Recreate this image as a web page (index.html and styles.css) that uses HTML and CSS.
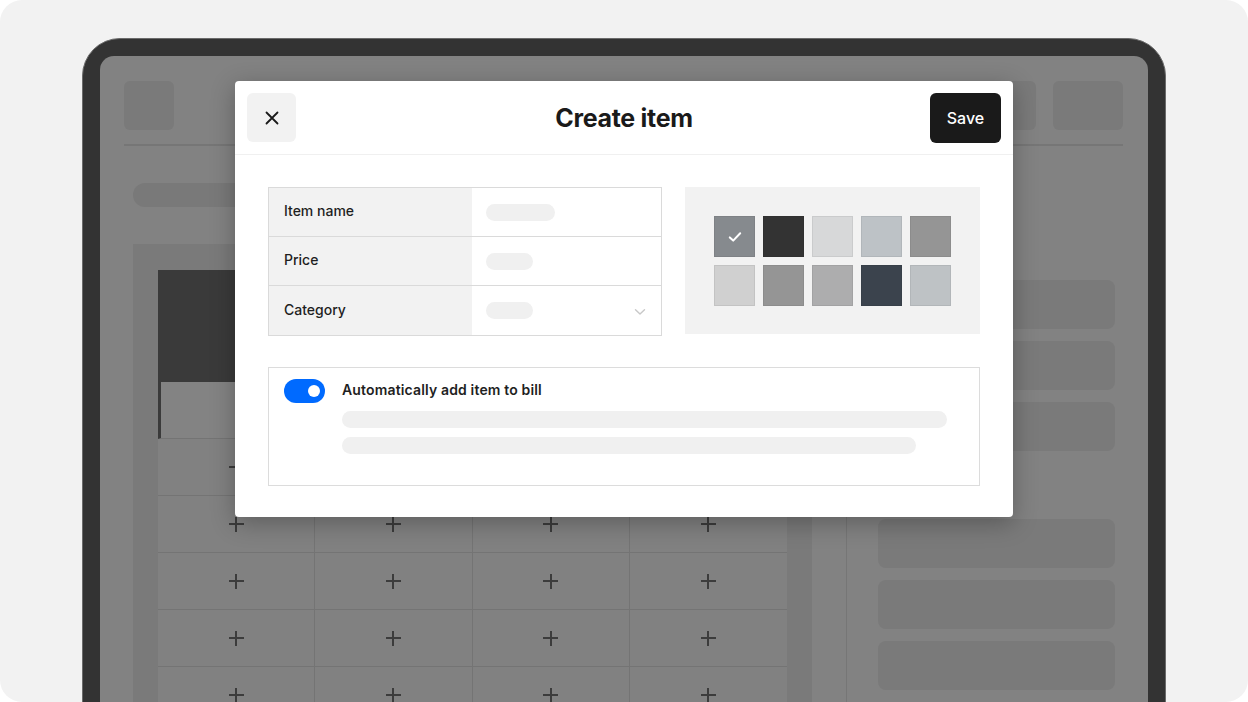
FILE: index.html
```html
<!DOCTYPE html>
<html lang="en">
<head>
<meta charset="UTF-8">
<meta name="viewport" content="width=device-width, initial-scale=1.0">
<title>Create item</title>
<link rel="stylesheet" href="styles.css">
</head>
<body>
<div class="frame">
    <div class="device">
        <div class="screen">
            <!-- dimmed app behind the dialog -->
            <div class="topbar">
                <div class="tile"></div>
                <div class="topbar-right">
                    <div class="tile wide"></div>
                    <div class="tile wide"></div>
                </div>
            </div>
            <div class="rule"></div>
            <div class="search-pill"></div>

            <div class="workspace">
                <div class="board">
                    <div class="board-head"></div>
                    <div class="board-row"></div>
                    <div class="board-grid">
                        <div class="cell"><span class="plus"></span></div>
                        <div class="cell"><span class="plus"></span></div>
                        <div class="cell"><span class="plus"></span></div>
                        <div class="cell"><span class="plus"></span></div>
                        <div class="cell"><span class="plus"></span></div>
                        <div class="cell"><span class="plus"></span></div>
                        <div class="cell"><span class="plus"></span></div>
                        <div class="cell"><span class="plus"></span></div>
                        <div class="cell"><span class="plus"></span></div>
                        <div class="cell"><span class="plus"></span></div>
                        <div class="cell"><span class="plus"></span></div>
                        <div class="cell"><span class="plus"></span></div>
                        <div class="cell"><span class="plus"></span></div>
                        <div class="cell"><span class="plus"></span></div>
                        <div class="cell"><span class="plus"></span></div>
                        <div class="cell"><span class="plus"></span></div>
                        <div class="cell"><span class="plus"></span></div>
                        <div class="cell"><span class="plus"></span></div>
                        <div class="cell"><span class="plus"></span></div>
                        <div class="cell"><span class="plus"></span></div>
                    </div>
                </div>
                <div class="sidebar">
                    <div class="side-box"></div>
                    <div class="side-box"></div>
                    <div class="side-box"></div>
                    <div class="side-gap"></div>
                    <div class="side-box"></div>
                    <div class="side-box"></div>
                    <div class="side-box"></div>
                </div>
            </div>

            <!-- Create item dialog -->
            <div class="modal">
                <div class="modal-header">
                    <button class="close-btn" aria-label="Close">
                        <svg width="16" height="16" viewBox="0 0 16 16" fill="none">
                            <path d="M2.5 2.5 L13.5 13.5 M13.5 2.5 L2.5 13.5" stroke="#1a1a1a" stroke-width="1.8" stroke-linecap="round"/>
                        </svg>
                    </button>
                    <h1 class="modal-title">Create item</h1>
                    <button class="save-btn">Save</button>
                </div>

                <div class="modal-body">
                    <div class="top-row">
                        <div class="fields">
                            <div class="field">
                                <div class="field-label">Item name</div>
                                <div class="field-value"><span class="skeleton long"></span></div>
                            </div>
                            <div class="field">
                                <div class="field-label">Price</div>
                                <div class="field-value"><span class="skeleton short"></span></div>
                            </div>
                            <div class="field">
                                <div class="field-label">Category</div>
                                <div class="field-value">
                                    <span class="skeleton short"></span>
                                    <svg class="chevron" width="12" height="8" viewBox="0 0 12 8" fill="none">
                                        <path d="M1.5 1.8 L6 6 L10.5 1.8" stroke="#c8c8c8" stroke-width="1.4" stroke-linecap="round" stroke-linejoin="round"/>
                                    </svg>
                                </div>
                            </div>
                        </div>

                        <div class="swatch-panel">
                            <div class="swatches">
                                <div class="swatch c1">
                                    <svg width="14" height="12" viewBox="0 0 14 12" fill="none">
                                        <path d="M1.8 6.4 L5.2 9.6 L12.2 2.2" stroke="#fff" stroke-width="2" stroke-linecap="round" stroke-linejoin="round"/>
                                    </svg>
                                </div>
                                <div class="swatch c2"></div>
                                <div class="swatch c3"></div>
                                <div class="swatch c4"></div>
                                <div class="swatch c5"></div>
                                <div class="swatch c6"></div>
                                <div class="swatch c7"></div>
                                <div class="swatch c8"></div>
                                <div class="swatch c9"></div>
                                <div class="swatch c10"></div>
                            </div>
                        </div>
                    </div>

                    <div class="auto-add">
                        <div class="toggle"><span class="knob"></span></div>
                        <div class="auto-text">
                            <div class="auto-label">Automatically add item to bill</div>
                            <div class="line wide-line"></div>
                            <div class="line mid-line"></div>
                        </div>
                    </div>
                </div>
            </div>
        </div>
    </div>
</div>
</body>
</html>
```

FILE: styles.css
```css
* {
    box-sizing: border-box;
}

html,
body {
    margin: 0;
    padding: 0;
    width: 1248px;
    height: 702px;
    overflow: hidden;
    background-color: #fff;
    font-family: Inter, 'Noto Sans', sans-serif;
}

.frame {
    width: 1248px;
    height: 702px;
    background-color: #f2f2f2;
    border-radius: 22px;
    padding-top: 38px;
    overflow: hidden;
}

/* Tablet */
.device {
    width: 1084px;
    height: 760px;
    margin: 0 auto;
    padding: 17px;
    background-color: #333;
    border: 1px solid #6b6b6b;
    border-radius: 38px;
}

.screen {
    position: relative;
    height: 100%;
    padding: 25px 25px 0 24px;
    background-color: #828282;
    border-radius: 14px;
    overflow: hidden;
}

.topbar {
    display: flex;
    justify-content: space-between;
    height: 49px;
}

.topbar-right {
    display: flex;
    gap: 17px;
}

.tile {
    width: 50px;
    height: 49px;
    background-color: #7a7a7a;
    border-radius: 6px;
}

.tile.wide {
    width: 70px;
}

.rule {
    height: 2px;
    margin-top: 14px;
    background-color: #767676;
}

.search-pill {
    width: 230px;
    height: 24px;
    margin: 37px 0 0 9px;
    background-color: #797979;
    border-radius: 12px;
}

.workspace {
    display: flex;
    margin: 37px -25px 0 9px;
}

.board {
    width: 679px;
    height: 520px;
    padding: 26px 25px 0;
    background-color: #7a7a7a;
}

.board-head {
    height: 112px;
    background-color: #3a3a3a;
}

.board-row {
    height: 57px;
    background-color: #838383;
    border-left: 3px solid #3a3a3a;
    border-bottom: 1px solid #747474;
}

.board-grid {
    display: grid;
    grid-template-columns: repeat(4, 1fr);
    grid-auto-rows: 57px;
}

.cell {
    display: flex;
    align-items: center;
    justify-content: center;
    background-color: #818181;
    border-right: 1px solid #747474;
    border-bottom: 1px solid #747474;
}

.cell:nth-child(4n) {
    border-right: none;
}

.plus {
    position: relative;
    width: 15px;
    height: 15px;
}

.plus::before,
.plus::after {
    content: "";
    position: absolute;
    background-color: #3c3c3c;
}

.plus::before {
    left: 0;
    top: 6.5px;
    width: 15px;
    height: 2px;
}

.plus::after {
    left: 6.5px;
    top: 0;
    width: 2px;
    height: 15px;
}

.sidebar {
    flex: 1;
    margin-left: 34px;
    padding: 36px 33px 0 31px;
    border-left: 1px solid #767676;
    display: flex;
    flex-direction: column;
    gap: 12px;
}

.side-box {
    height: 49px;
    flex: none;
    background-color: #7a7a7a;
    border-radius: 8px;
}

.side-gap {
    height: 44px;
    flex: none;
}

/* Dialog */
.modal {
    position: absolute;
    left: 135px;
    top: 25px;
    width: 778px;
    height: 436px;
    background-color: #fff;
    border-radius: 4px;
    box-shadow: 0 6px 24px rgba(0, 0, 0, 0.28);
}

.modal-header {
    position: relative;
    display: flex;
    align-items: center;
    justify-content: space-between;
    height: 74px;
    padding: 0 12px;
    border-bottom: 1px solid #f0f0f0;
}

.close-btn {
    display: flex;
    align-items: center;
    justify-content: center;
    width: 49px;
    height: 49px;
    padding: 0;
    border: none;
    border-radius: 6px;
    background-color: #f2f2f2;
}

.modal-title {
    position: absolute;
    left: 0;
    right: 0;
    top: 23px;
    margin: 0;
    text-align: center;
    font-size: 25px;
    line-height: 29px;
    font-weight: 700;
    letter-spacing: -0.3px;
    color: #1a1a1a;
    pointer-events: none;
}

.save-btn {
    width: 71px;
    height: 50px;
    padding: 0;
    border: none;
    border-radius: 6px;
    background-color: #1a1a1a;
    color: #fff;
    font-family: Inter, 'Noto Sans', sans-serif;
    font-size: 16px;
    font-weight: 500;
}

.modal-body {
    padding: 32px 33px 0;
}

.top-row {
    display: flex;
    justify-content: space-between;
}

.fields {
    width: 394px;
    border: 1px solid #dadada;
}

.field {
    display: flex;
    height: 49px;
    border-bottom: 1px solid #dadada;
}

.field:last-child {
    border-bottom: none;
}

.field-label {
    display: flex;
    align-items: center;
    width: 203px;
    padding: 0 0 3px 15px;
    background-color: #f2f2f2;
    font-size: 14px;
    font-weight: 500;
    color: #1f1f1f;
}

.field-value {
    position: relative;
    display: flex;
    align-items: center;
    flex: 1;
    padding-left: 14px;
}

.skeleton {
    display: block;
    height: 17px;
    background-color: #f0f0f0;
    border-radius: 9px;
}

.skeleton.long {
    width: 69px;
}

.skeleton.short {
    width: 47px;
}

.chevron {
    position: absolute;
    right: 15px;
    top: 22px;
}

.swatch-panel {
    width: 295px;
    height: 147px;
    padding: 29px;
    background-color: #f2f2f2;
}

.swatches {
    display: grid;
    grid-template-columns: repeat(5, 41px);
    grid-auto-rows: 41px;
    gap: 8px;
}

.swatch {
    display: flex;
    align-items: center;
    justify-content: center;
    border: 1px solid rgba(0, 0, 0, 0.06);
}

.c1 { background-color: #868a8e; }
.c2 { background-color: #333; }
.c3 { background-color: #d7d8d9; }
.c4 { background-color: #bdc2c6; }
.c5 { background-color: #959595; }
.c6 { background-color: #d0d0d0; }
.c7 { background-color: #959595; }
.c8 { background-color: #adadae; }
.c9 { background-color: #3b434d; }
.c10 { background-color: #bec2c5; }

.auto-add {
    display: flex;
    gap: 17px;
    height: 119px;
    margin-top: 31px;
    padding: 11px 16px 0 15px;
    border: 1px solid #dcdcdc;
}

.toggle {
    position: relative;
    flex: none;
    width: 41px;
    height: 24px;
    background-color: #006aff;
    border-radius: 12px;
}

.knob {
    position: absolute;
    right: 5px;
    top: 6px;
    width: 12px;
    height: 12px;
    background-color: #fff;
    border-radius: 50%;
}

.auto-text {
    flex: 1;
    padding-right: 16px;
}

.auto-label {
    height: 21px;
    font-size: 14px;
    line-height: 21px;
    font-weight: 600;
    letter-spacing: 0.15px;
    color: #1f1f1f;
}

.line {
    height: 17px;
    margin-top: 9px;
    background-color: #f0f0f0;
    border-radius: 9px;
}

.wide-line {
    width: 605px;
    margin-top: 11px;
}

.mid-line {
    width: 574px;
}
```
